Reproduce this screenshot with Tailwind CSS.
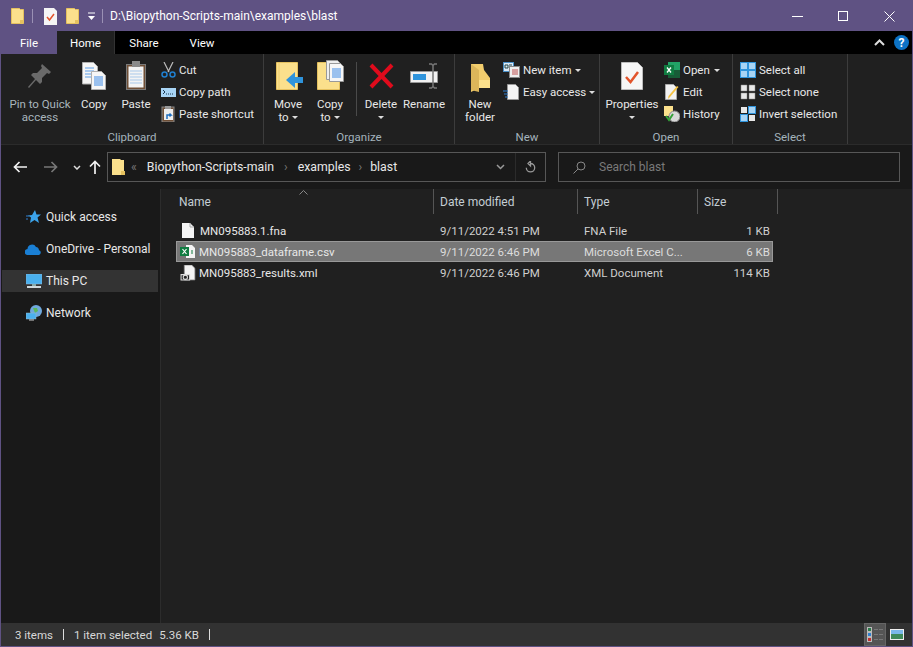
<!DOCTYPE html>
<html lang="en">
<head>
    <meta charset="UTF-8">
    <title>blast</title>
    <script src="https://cdn.jsdelivr.net/npm/@tailwindcss/browser@4"></script>
</head>
<body class="bg-[#5f5283]">
<div class="w-[913px] h-[647px] overflow-hidden flex flex-col border border-[#5f5283] font-['Roboto',sans-serif] text-[12px] leading-[16px] text-[#e8e8e8] whitespace-nowrap">

    <!-- title bar -->
    <div class="h-[30px] shrink-0 flex items-center bg-[#5f5283] text-white">
        <svg class="ml-[10px] w-[14px] h-[16px]" viewBox="0 0 14 16"><path d="M.5.5h8l1 1H12.500V15.500H.5z" fill="#fbe08c" stroke="#e5c15f"/><path d="M9 12h4v3H9z" fill="#e5c15f"/></svg>
        <div class="ml-[7px] w-px h-[14px] bg-[#9a90b4]"></div>
        <svg class="ml-[11px] w-[13px] h-[17px]" viewBox="0 0 13 17"><path d="M0 0h10l3 3v14H0z" fill="#f5f5f5"/><path d="M3 9l2.500 3L10 6" fill="none" stroke="#e2542c" stroke-width="1.500"/></svg>
        <svg class="ml-[9px] w-[14px] h-[16px]" viewBox="0 0 14 16"><path d="M.5.5h8l1 1H12.500V15.500H.5z" fill="#fbe08c" stroke="#e5c15f"/><path d="M9 12h4v3H9z" fill="#e5c15f"/></svg>
        <svg class="ml-[7px] w-[9px] h-[9px]" viewBox="0 0 9 9"><path d="M1 1h7" stroke="#fff"/><path d="M1 4h7L4.500 8z" fill="#fff"/></svg>
        <div class="ml-[6px] w-px h-[14px] bg-[#9a90b4]"></div>
        <span class="ml-[7px]">D:\Biopython-Scripts-main\examples\blast</span>
        <div class="ml-auto flex">
            <div class="w-[46px] h-[30px] flex items-center justify-center"><div class="w-[11px] h-px bg-white"></div></div>
            <div class="w-[46px] h-[30px] flex items-center justify-center"><div class="w-[10px] h-[10px] border border-white"></div></div>
            <div class="w-[46px] h-[30px] flex items-center justify-center">
                <svg class="w-[11px] h-[11px]" viewBox="0 0 11 11"><path d="M.5.5l10 10M10.500.5l-10 10" stroke="#fff" fill="none"/></svg>
            </div>
        </div>
    </div>

    <!-- ribbon tabs -->
    <div class="h-[23px] shrink-0 flex items-stretch bg-black text-white text-[11.5px]">
        <div class="w-[56px] flex items-center justify-center bg-[#5f5283]">File</div>
        <div class="w-[58px] flex items-center justify-center bg-[#202020] border-r border-[#333]">Home</div>
        <div class="w-[58px] flex items-center justify-center">Share</div>
        <div class="w-[58px] flex items-center justify-center">View</div>
        <div class="ml-auto flex items-center pr-[3px] gap-[9px]">
            <svg class="w-[11px] h-[7px]" viewBox="0 0 11 7"><path d="M1 6l4.500-4.500L10 6" fill="none" stroke="#ddd" stroke-width="2"/></svg>
            <div class="w-[15px] h-[15px] rounded-full bg-[#0d72c4] flex items-center justify-center text-[12px] font-bold text-white">?</div>
        </div>
    </div>

    <!-- ribbon -->
    <div class="h-[91px] shrink-0 flex bg-[#202020] border-b border-[#2b2b2b] text-[11.5px]">

        <!-- clipboard -->
        <div class="w-[263px] flex flex-col border-r border-[#3c3c3c]">
            <div class="flex h-[76px] pt-[8px]">
                <div class="w-[74px] flex flex-col items-center pl-[4px] text-[#a9b6bd]">
                    <svg class="w-[24px] h-[26px] mt-[1px]" viewBox="0 0 24 26"><path d="M14 1l9 8-2 2-2-1-5 5 0 4-2 2-4-4-7 8-1-1 7-8-4-4 2-2 4 0 5-5-1-2z" fill="#6a6a6a"/></svg>
                    <span class="mt-[9px] text-center leading-[13px]">Pin to Quick<br>access</span>
                </div>
                <div class="w-[38px] flex flex-col items-center">
                    <svg class="w-[24px] h-[28px]" viewBox="0 0 24 28">
                        <path d="M.5.5h11l4 4V22H.5z" fill="#f6f6f6" stroke="#b0b0b0"/>
                        <path d="M3 6h9M3 9h9M3 12h9M3 15h9" stroke="#5c9ee8"/>
                        <path d="M9.500 9.500h10l4 4V27.500H9.500z" fill="#f6f6f6" stroke="#b0b0b0"/>
                        <path d="M12 15h9M12 17h9M12 19h9M12 21h9M12 23h9" stroke="#3f8be6"/>
                    </svg>
                    <span class="mt-[8px] leading-[13px]">Copy</span>
                </div>
                <div class="w-[46px] flex flex-col items-center">
                    <svg class="w-[20px] h-[29px] -mt-[1px]" viewBox="0 0 20 29">
                        <rect x=".5" y="3.500" width="19" height="25" fill="#6f4f36" stroke="#7a7a7a"/>
                        <rect x="2.500" y="5.500" width="15" height="21" fill="#f4f4f4"/>
                        <rect x="6" y="0" width="8" height="6" fill="#8a8a8a"/>
                        <path d="M4 10h12M4 13h12M4 16h12M4 19h12M4 22h12" stroke="#a9c9ea"/>
                    </svg>
                    <span class="mt-[8px] leading-[13px]">Paste</span>
                </div>
                <div class="flex flex-col gap-[6px] pl-[2px]">
                    <div class="h-[16px] flex items-center gap-[3px]">
                        <svg class="w-[15px] h-[16px]" viewBox="0 0 15 16"><path d="M3 0l5 10M12 0L7 10" stroke="#bbb" stroke-width="1.200" fill="none"/><circle cx="3.500" cy="12.500" r="2.500" fill="none" stroke="#1f7fd0" stroke-width="1.500"/><circle cx="11.500" cy="12.500" r="2.500" fill="none" stroke="#1f7fd0" stroke-width="1.500"/></svg>
                        <span>Cut</span>
                    </div>
                    <div class="h-[16px] flex items-center gap-[3px]">
                        <svg class="w-[15px] h-[9px]" viewBox="0 0 15 9"><rect width="15" height="9" fill="#a8d4f5"/><path d="M2 2l2 2-2 2M5 6h1M7 6h1M9 6h1M11 6h1" stroke="#1c3a52" fill="none"/></svg>
                        <span>Copy path</span>
                    </div>
                    <div class="h-[16px] flex items-center gap-[3px]">
                        <svg class="w-[15px] h-[16px]" viewBox="0 0 15 16"><rect x="1" y="1" width="12" height="15" fill="#6f4f36" stroke="#888"/><rect x="3" y="3" width="9" height="11" fill="#eee"/><rect x="4" y="0" width="6" height="3" fill="#999"/><path d="M6 13V9h4l-1.500-1.500M10 9l-1.500 1.500" stroke="#1f6fc0" stroke-width="1.500" fill="none"/></svg>
                        <span>Paste shortcut</span>
                    </div>
                </div>
            </div>
            <div class="text-center leading-[14px] text-[#a4b3bc]">Clipboard</div>
        </div>

        <!-- organize -->
        <div class="w-[191px] flex flex-col border-r border-[#3c3c3c]">
            <div class="flex h-[76px] pt-[8px]">
                <div class="w-[48px] flex flex-col items-center">
                    <svg class="w-[27px] h-[28px] ml-[2px]" viewBox="0 0 27 28"><path d="M.5.5h21v27H.5z" fill="#fbe08c" stroke="#e5c15f"/><path d="M3 1v26" stroke="#f0cd6e"/><path d="M10 18l9-8v5h8v6h-8v5z" fill="#2f94dc"/></svg>
                    <span class="mt-[8px] leading-[13px]">Move</span>
                    <span class="flex items-center gap-[3px] leading-[13px]">to<svg class="w-[6px] h-[3px]" viewBox="0 0 6 3"><path d="M0 0h6L3 3z" fill="#ddd"/></svg></span>
                </div>
                <div class="w-[36px] flex flex-col items-center">
                    <svg class="w-[27px] h-[30px] -mt-[2px]" viewBox="0 0 27 30"><path d="M.5 2.500h22v27H.5z" fill="#fbe08c" stroke="#e5c15f"/><path d="M9.500.5h11l4 4v15h-15z" fill="#eee" stroke="#999"/><path d="M12.500 3.500h11l3 3v15h-14z" fill="#f6f6f6" stroke="#999"/><path d="M15 9h9M15 11h9M15 13h9M15 15h9M15 17h9" stroke="#3f8be6"/></svg>
                    <span class="mt-[8px] leading-[13px]">Copy</span>
                    <span class="flex items-center gap-[3px] leading-[13px]">to<svg class="w-[6px] h-[3px]" viewBox="0 0 6 3"><path d="M0 0h6L3 3z" fill="#ddd"/></svg></span>
                </div>
                <div class="w-px h-[54px] ml-[8px] bg-[#4a4a4a]"></div>
                <div class="w-[42px] ml-[3px] flex flex-col items-center">
                    <svg class="w-[25px] h-[26px] mt-[1px]" viewBox="0 0 25 26"><path d="M2 2l21 22M23 2L2 24" stroke="#e00b1c" stroke-width="4" fill="none"/></svg>
                    <span class="mt-[9px] leading-[13px]">Delete</span>
                    <svg class="mt-[5px] w-[6px] h-[3px]" viewBox="0 0 6 3"><path d="M0 0h6L3 3z" fill="#ddd"/></svg>
                </div>
                <div class="w-[44px] flex flex-col items-center">
                    <svg class="w-[28px] h-[26px] mt-[1px]" viewBox="0 0 28 26"><path d="M.5 8.500h27v11H.5z" fill="#f2f2f2" stroke="#999"/><rect x="3" y="11" width="13" height="6" fill="#2f94dc"/><path d="M19 1h2.500L23 2.500 24.500 1H27M23 2v22M19 25h2.500L23 23.500 24.500 25H27" stroke="#777" stroke-width="1.500" fill="none"/></svg>
                    <span class="mt-[9px] leading-[13px]">Rename</span>
                </div>
            </div>
            <div class="text-center leading-[14px] text-[#a4b3bc]">Organize</div>
        </div>

        <!-- new -->
        <div class="w-[145px] flex flex-col border-r border-[#3c3c3c]">
            <div class="flex h-[76px] pt-[8px]">
                <div class="w-[48px] pl-[2px] flex flex-col items-center">
                    <svg class="w-[19px] h-[28px] mt-[2px]" viewBox="0 0 19 28"><path d="M0 0h12l1 6 6 8v10H8l-8 4z" fill="#f2cd6d"/><path d="M0 0l8 6v22l-8-2z" fill="#dcb65a"/><path d="M8 16h11v8H8z" fill="#fbe08c"/></svg>
                    <span class="mt-[6px] text-center leading-[13px]">New<br>folder</span>
                </div>
                <div class="flex flex-col gap-[6px]">
                    <div class="h-[16px] flex items-center gap-[3px]">
                        <svg class="w-[17px] h-[16px]" viewBox="0 0 17 16"><rect x=".5" y=".5" width="10" height="9" fill="#dceaf6" stroke="#4a90c8"/><path d="M2 3h3v3H2zM6 3h3" stroke="#244" fill="none"/><rect x="6.500" y="4.500" width="10" height="11" fill="#eee" stroke="#888"/><path d="M9 8h6M9 10h6M9 12h6" stroke="#c05050"/></svg>
                        <span>New item</span>
                        <svg class="w-[6px] h-[3px]" viewBox="0 0 6 3"><path d="M0 0h6L3 3z" fill="#ddd"/></svg>
                    </div>
                    <div class="h-[16px] flex items-center gap-[3px]">
                        <svg class="w-[17px] h-[16px]" viewBox="0 0 17 16"><path d="M4.500.5h8l3 3v12h-11z" fill="#f4f4f4" stroke="#999"/><path d="M0 7h5M1 10h4M2 13h3" stroke="#2f7fd0"/></svg>
                        <span>Easy access</span>
                        <svg class="w-[6px] h-[3px]" viewBox="0 0 6 3"><path d="M0 0h6L3 3z" fill="#ddd"/></svg>
                    </div>
                </div>
            </div>
            <div class="text-center leading-[14px] text-[#a4b3bc]">New</div>
        </div>

        <!-- open -->
        <div class="w-[133px] flex flex-col border-r border-[#3c3c3c]">
            <div class="flex h-[76px] pt-[8px]">
                <div class="w-[64px] flex flex-col items-center">
                    <svg class="w-[22px] h-[28px]" viewBox="0 0 22 28"><path d="M.5.5h16l5 5v22H.5z" fill="#f6f6f6" stroke="#bbb"/><path d="M5 15l4.500 5L17 10" fill="none" stroke="#e2542c" stroke-width="2.500"/></svg>
                    <span class="mt-[8px] leading-[13px]">Properties</span>
                    <svg class="mt-[5px] w-[6px] h-[3px]" viewBox="0 0 6 3"><path d="M0 0h6L3 3z" fill="#ddd"/></svg>
                </div>
                <div class="flex flex-col gap-[6px]">
                    <div class="h-[16px] flex items-center gap-[3px]">
                        <svg class="w-[16px] h-[16px]" viewBox="0 0 16 16"><rect x="4" y="0" width="12" height="16" fill="#21a366"/><rect x="4" y="8" width="12" height="8" fill="#185c37"/><rect x="0" y="3" width="10" height="10" fill="#107c41"/><path d="M3 5.500l4 5M7 5.500l-4 5" stroke="#fff" stroke-width="1.300"/></svg>
                        <span>Open</span>
                        <svg class="ml-[1px] w-[6px] h-[3px]" viewBox="0 0 6 3"><path d="M0 0h6L3 3z" fill="#ddd"/></svg>
                    </div>
                    <div class="h-[16px] flex items-center gap-[3px]">
                        <svg class="w-[16px] h-[16px]" viewBox="0 0 16 16"><path d="M1.500.5h8l3 3v12h-11z" fill="#f2f2f2" stroke="#aaa"/><path d="M14.500 3L6 13l-2 2 .5-3L13 2z" fill="#f5c242"/></svg>
                        <span>Edit</span>
                    </div>
                    <div class="h-[16px] flex items-center gap-[3px]">
                        <svg class="w-[16px] h-[16px]" viewBox="0 0 16 16"><path d="M0 0h9v10H0z" fill="#fbe08c"/><circle cx="10.500" cy="10.500" r="5.500" fill="#d8d8d8" stroke="#888"/><path d="M2 10l3 4 4-6" stroke="#35a13a" stroke-width="2" fill="none"/></svg>
                        <span>History</span>
                    </div>
                </div>
            </div>
            <div class="text-center leading-[14px] text-[#a4b3bc]">Open</div>
        </div>

        <!-- select -->
        <div class="w-[115px] flex flex-col border-r border-[#3c3c3c]">
            <div class="flex flex-col h-[76px] pt-[8px] pl-[7px] gap-[6px]">
                <div class="h-[16px] flex items-center gap-[3px]">
                    <svg class="w-[16px] h-[16px]" viewBox="0 0 16 16"><rect width="16" height="16" fill="#2f94dc"/><path d="M1 1h6v6H1zM9 1h6v6H9zM1 9h6v6H1zM9 9h6v6H9z" fill="#a8d4f5"/></svg>
                    <span>Select all</span>
                </div>
                <div class="h-[16px] flex items-center gap-[3px]">
                    <svg class="w-[16px] h-[16px]" viewBox="0 0 16 16"><path d="M1 1h6v6H1zM9 1h6v6H9zM1 9h6v6H1zM9 9h6v6H9z" fill="#e8e8e8" stroke="#888" stroke-width=".5"/></svg>
                    <span>Select none</span>
                </div>
                <div class="h-[16px] flex items-center gap-[3px]">
                    <svg class="w-[16px] h-[16px]" viewBox="0 0 16 16"><path d="M8 0h8v8H8zM0 8h8v8H0z" fill="#2f94dc"/><path d="M9 1h6v6H9zM1 9h6v6H1z" fill="#a8d4f5"/><path d="M1 1h6v6H1zM9 9h6v6H9z" fill="#e8e8e8"/></svg>
                    <span>Invert selection</span>
                </div>
            </div>
            <div class="text-center leading-[14px] text-[#a4b3bc]">Select</div>
        </div>
    </div>

    <!-- nav bar -->
    <div class="h-[44px] shrink-0 flex items-center bg-[#191919]">
        <svg class="ml-[12px] w-[14px] h-[12px]" viewBox="0 0 14 12"><path d="M14 6H1.500M6.500 1l-5 5 5 5" fill="none" stroke="#f2f2f2" stroke-width="1.700"/></svg>
        <svg class="ml-[17px] w-[14px] h-[12px]" viewBox="0 0 14 12"><path d="M0 6h12.500M7.500 1l5 5-5 5" fill="none" stroke="#777" stroke-width="1.700"/></svg>
        <svg class="ml-[15px] w-[8px] h-[5px]" viewBox="0 0 8 5"><path d="M1 1l3 3 3-3" fill="none" stroke="#ddd" stroke-width="1.500"/></svg>
        <svg class="ml-[8px] w-[12px] h-[14px]" viewBox="0 0 12 14"><path d="M6 14V1.500M1 6.500l5-5 5 5" fill="none" stroke="#f2f2f2" stroke-width="1.700"/></svg>
        <div class="ml-[6px] w-[439px] h-[30px] flex items-center border border-[#575757] text-[#e8e8e8] text-[12.3px]">
            <svg class="ml-[4px] w-[13px] h-[16px]" viewBox="0 0 13 16"><path d="M0 0h8l1 1h3v15H0z" fill="#fbe08c"/><path d="M9 12h4v4H9z" fill="#e5c15f"/></svg>
            <span class="ml-[6px] text-[#777]">«</span>
            <span class="ml-[10px]">Biopython-Scripts-main</span>
            <span class="ml-[10px] text-[#777]">›</span>
            <span class="ml-[10px]">examples</span>
            <span class="ml-[8px] text-[#777]">›</span>
            <span class="ml-[8px]">blast</span>
            <svg class="ml-auto w-[9px] h-[6px]" viewBox="0 0 9 6"><path d="M1 1l3.500 3.500L8 1" fill="none" stroke="#999" stroke-width="1.500"/></svg>
            <div class="ml-[10px] w-px h-[28px] bg-[#2b2b2b]"></div>
            <svg class="mx-[9px] w-[11px] h-[12px]" viewBox="0 0 11 12"><path d="M5.500 2.500a4.200 4.200 0 1 1-4.200 4.200M5.500 0v5l-2.500-2.500z" fill="none" stroke="#999" stroke-width="1.300"/></svg>
        </div>
        <div class="ml-[12px] w-[342px] h-[30px] flex items-center border border-[#575757] text-[#7a7a7a]">
            <svg class="ml-[14px] w-[13px] h-[13px]" viewBox="0 0 13 13"><circle cx="8" cy="5" r="4" fill="none" stroke="#888"/><path d="M5 8l-4.500 4.500" stroke="#888"/></svg>
            <span class="ml-[13px]">Search blast</span>
        </div>
    </div>

    <!-- body -->
    <div class="flex-1 flex min-h-0">
        <!-- sidebar -->
        <div class="w-[157px] shrink-0 bg-[#191919] pt-[17px] flex flex-col gap-[10px]">
            <div class="h-[22px] flex items-center pl-[25px] gap-[5px]">
                <svg class="w-[15px] h-[14px]" viewBox="0 0 15 14"><path d="M9 0l1.500 4.500H15l-3.500 3L13 13 8.500 10 4 13l1-5.500L2 5.500l4 -.5z" fill="#3ba3ea"/><path d="M0 6h3M0 9h2" stroke="#2f7fd0"/></svg>
                <span>Quick access</span>
            </div>
            <div class="h-[22px] flex items-center pl-[24px] gap-[4px]">
                <svg class="w-[17px] h-[11px]" viewBox="0 0 17 11"><path d="M3 11a3 3 0 0 1-.5-6 4.500 4.500 0 0 1 8.500-2 3.500 3.500 0 0 1 3 3.200A2.500 2.500 0 0 1 14 11z" fill="#1a7fd4"/></svg>
                <span>OneDrive - Personal</span>
            </div>
            <div class="h-[22px] flex items-center pl-[24px] gap-[4px] bg-[#333] ml-px">
                <svg class="w-[16px] h-[15px]" viewBox="0 0 16 15"><rect x="0" y="0" width="16" height="10" fill="#4ab0ee" stroke="#8fb8d8" stroke-width=".5"/><path d="M6 10h4v2H6z" fill="#8aa"/><path d="M1 12h14v2H1z" fill="#cfd8dc"/></svg>
                <span>This PC</span>
            </div>
            <div class="h-[22px] flex items-center pl-[25px] gap-[4px]">
                <svg class="w-[16px] h-[16px]" viewBox="0 0 16 16"><circle cx="10" cy="6" r="6" fill="#6fa8dc"/><path d="M7 3h4l1 3-3 2z" fill="#5cb85c"/><rect x="0" y="8" width="10" height="6" fill="#4ab0ee" stroke="#9bc" stroke-width=".5"/><path d="M3 15h5" stroke="#ccc"/></svg>
                <span>Network</span>
            </div>
        </div>
        <div class="w-[2px] shrink-0 bg-[#191919]"></div>
        <div class="w-px shrink-0 bg-[#2c2c2c]"></div>

        <!-- file list -->
        <div class="flex-1 bg-[#202020] pl-[15px] relative">
            <svg class="absolute left-[138px] top-[1px] w-[9px] h-[5px]" viewBox="0 0 9 5"><path d="M.5 4.500l4-4 4 4" fill="none" stroke="#888"/></svg>
            <div class="h-[25px] flex text-[#c4ced4]">
                <div class="w-[258px] pl-[3px] flex items-center border-r border-[#555]">Name</div>
                <div class="w-[144px] pl-[6px] flex items-center border-r border-[#555]">Date modified</div>
                <div class="w-[120px] pl-[6px] flex items-center border-r border-[#555]">Type</div>
                <div class="w-[80px] pl-[6px] flex items-center border-r border-[#555]">Size</div>
            </div>
            <div class="mt-[6px] flex flex-col text-[11.5px]">
                <div class="h-[21px] w-[597px] flex items-center border border-transparent">
                    <div class="w-[256px] flex items-center pl-[4px] gap-[5px]">
                        <svg class="w-[12px] h-[15px] mx-[1px]" viewBox="0 0 12 15"><path d="M0 0h8l4 4v11H0z" fill="#f4f4f4"/><path d="M8 0v4h4" fill="none" stroke="#aaa"/></svg>
                        <span>MN095883.1.fna</span>
                    </div>
                    <div class="w-[144px] pl-[7px] text-[#cfcfcf]">9/11/2022 4:51 PM</div>
                    <div class="w-[120px] pl-[7px] text-[#cfcfcf]">FNA File</div>
                    <div class="flex-1 text-right pr-[2px] text-[#cfcfcf]">1 KB</div>
                </div>
                <div class="h-[21px] w-[597px] flex items-center bg-[#777] border border-[#999]">
                    <div class="w-[256px] flex items-center pl-[3px] gap-[4px]">
                        <svg class="w-[15px] h-[13px]" viewBox="0 0 15 13"><path d="M6 0h6l3 3v10H6z" fill="#f4f4f4"/><rect x="0" y="2" width="9" height="9" fill="#107c41"/><path d="M2.500 4l4 5M6.500 4l-4 5" stroke="#fff" stroke-width="1.200"/><path d="M11 8h2M11 6h2" stroke="#107c41"/></svg>
                        <span>MN095883_dataframe.csv</span>
                    </div>
                    <div class="w-[144px] pl-[7px] text-[#dcdcdc]">9/11/2022 6:46 PM</div>
                    <div class="w-[120px] pl-[7px] text-[#dcdcdc]">Microsoft Excel C...</div>
                    <div class="flex-1 text-right pr-[2px] text-[#dcdcdc]">6 KB</div>
                </div>
                <div class="h-[21px] w-[597px] flex items-center border border-transparent">
                    <div class="w-[256px] flex items-center pl-[3px] gap-[3px]">
                        <svg class="w-[16px] h-[16px]" viewBox="0 0 15 15"><path d="M4 0h7l3 3v11H4z" fill="#f4f4f4" stroke="#888" stroke-width=".7"/><path d="M1 9h8v5H1z" fill="#202020" stroke="#ddd"/><circle cx="5" cy="11.500" r="2" fill="none" stroke="#ddd"/></svg>
                        <span>MN095883_results.xml</span>
                    </div>
                    <div class="w-[144px] pl-[7px] text-[#cfcfcf]">9/11/2022 6:46 PM</div>
                    <div class="w-[120px] pl-[7px] text-[#cfcfcf]">XML Document</div>
                    <div class="flex-1 text-right pr-[2px] text-[#cfcfcf]">114 KB</div>
                </div>
            </div>
        </div>
    </div>

    <!-- status bar -->
    <div class="h-[23px] shrink-0 flex items-center bg-[#323232] text-[#d8d8d8] text-[11.5px]">
        <span class="ml-[14px]">3 items</span>
        <div class="ml-[10px] w-px h-[11px] bg-[#ddd]"></div>
        <span class="ml-[10px]">1 item selected</span>
        <span class="ml-[7px]">5.36 KB</span>
        <div class="ml-[10px] w-px h-[11px] bg-[#ddd]"></div>
        <div class="ml-auto w-[22px] h-[23px] bg-[#555] border border-[#666] flex items-center justify-center">
            <svg class="w-[16px] h-[15px]" viewBox="0 0 16 15"><rect width="5" height="15" fill="#bbb"/><rect x="1" y="1" width="3" height="3" fill="#2c7a4a"/><rect x="1" y="6" width="3" height="3" fill="#2f7fd0"/><rect x="1" y="11" width="3" height="3" fill="#c03030"/><path d="M7 2.500h4M12 2.500h4M7 7.500h4M12 7.500h4M7 12.500h4M12 12.500h4" stroke="#777"/></svg>
        </div>
        <svg class="ml-[4px] mr-[8px] w-[14px] h-[11px]" viewBox="0 0 14 11"><rect width="14" height="11" fill="#eee"/><rect x="1" y="1" width="12" height="4" fill="#7ab8e8"/><rect x="1" y="5" width="12" height="5" fill="#3f8a58"/></svg>
    </div>
</div>
</body>
</html>
